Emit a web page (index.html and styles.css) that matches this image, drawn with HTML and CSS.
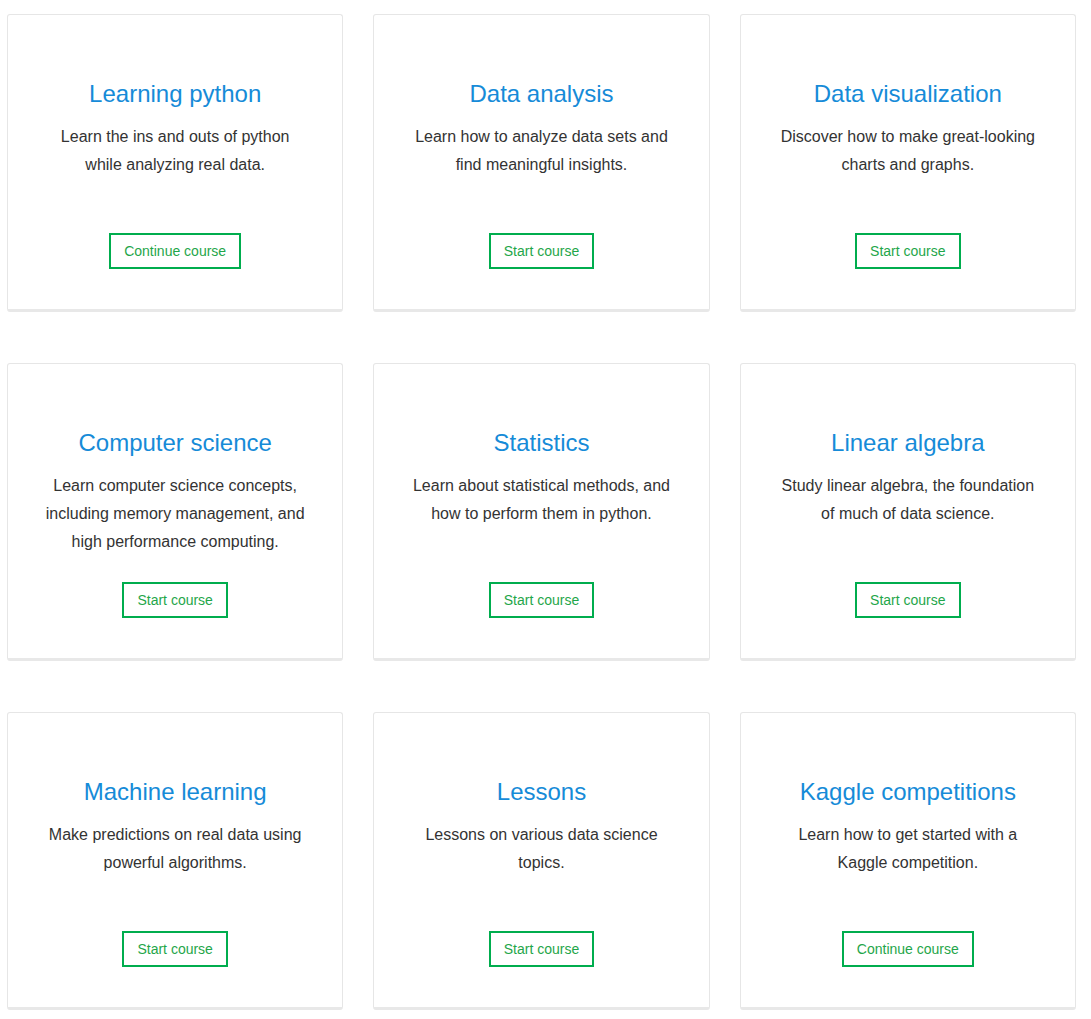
FILE: index.html
```html
<!DOCTYPE html>
<html lang="en">
<head>
<meta charset="utf-8">
<title>Courses</title>
<link rel="stylesheet" href="styles.css">
</head>
<body>
<div class="grid">
  <div class="card">
    <h2 class="card-title">Learning python</h2>
    <p class="card-text">Learn the ins and outs of python while analyzing real data.</p>
    <a class="btn" href="#">Continue course</a>
  </div>
  <div class="card">
    <h2 class="card-title">Data analysis</h2>
    <p class="card-text">Learn how to analyze data sets and find meaningful insights.</p>
    <a class="btn" href="#">Start course</a>
  </div>
  <div class="card">
    <h2 class="card-title">Data visualization</h2>
    <p class="card-text">Discover how to make great-looking charts and graphs.</p>
    <a class="btn" href="#">Start course</a>
  </div>
  <div class="card">
    <h2 class="card-title">Computer science</h2>
    <p class="card-text">Learn computer science concepts, including memory management, and high performance computing.</p>
    <a class="btn" href="#">Start course</a>
  </div>
  <div class="card">
    <h2 class="card-title">Statistics</h2>
    <p class="card-text">Learn about statistical methods, and how to perform them in python.</p>
    <a class="btn" href="#">Start course</a>
  </div>
  <div class="card">
    <h2 class="card-title">Linear algebra</h2>
    <p class="card-text">Study linear algebra, the foundation of much of data science.</p>
    <a class="btn" href="#">Start course</a>
  </div>
  <div class="card">
    <h2 class="card-title">Machine learning</h2>
    <p class="card-text">Make predictions on real data using powerful algorithms.</p>
    <a class="btn" href="#">Start course</a>
  </div>
  <div class="card">
    <h2 class="card-title">Lessons</h2>
    <p class="card-text">Lessons on various data science topics.</p>
    <a class="btn" href="#">Start course</a>
  </div>
  <div class="card">
    <h2 class="card-title">Kaggle competitions</h2>
    <p class="card-text">Learn how to get started with a Kaggle competition.</p>
    <a class="btn" href="#">Continue course</a>
  </div>
</div>
</body>
</html>
```
FILE: styles.css
```css
html, body {
  margin: 0;
  padding: 0;
  background: #ffffff;
}

body {
  font-family: "Liberation Sans", Arial, Helvetica, sans-serif;
  color: #333333;
}

.grid {
  display: grid;
  grid-template-columns: repeat(3, 1fr);
  column-gap: 30px;
  row-gap: 51px;
  padding: 14px 15px 0 7px;
}

.card {
  display: flex;
  flex-direction: column;
  align-items: center;
  text-align: center;
  border: 1px solid #e6e6e6;
  border-bottom: 3px solid #e8e8e8;
  border-radius: 3px;
  padding: 66px 35px 40px;
  background: #ffffff;
}

.card-title {
  margin: 0;
  font-size: 24px;
  font-weight: normal;
  line-height: 26px;
  color: #168bd8;
}

.card-text {
  margin: 16px 0 0;
  height: 84px;
  font-size: 16px;
  line-height: 28px;
  color: #333333;
}

.btn {
  margin-top: 26px;
  display: inline-block;
  padding: 8px 13px;
  font-size: 14px;
  line-height: 16px;
  color: #1fa64a;
  border: 2px solid #00ad4e;
  text-decoration: none;
  background: #ffffff;
}
```
